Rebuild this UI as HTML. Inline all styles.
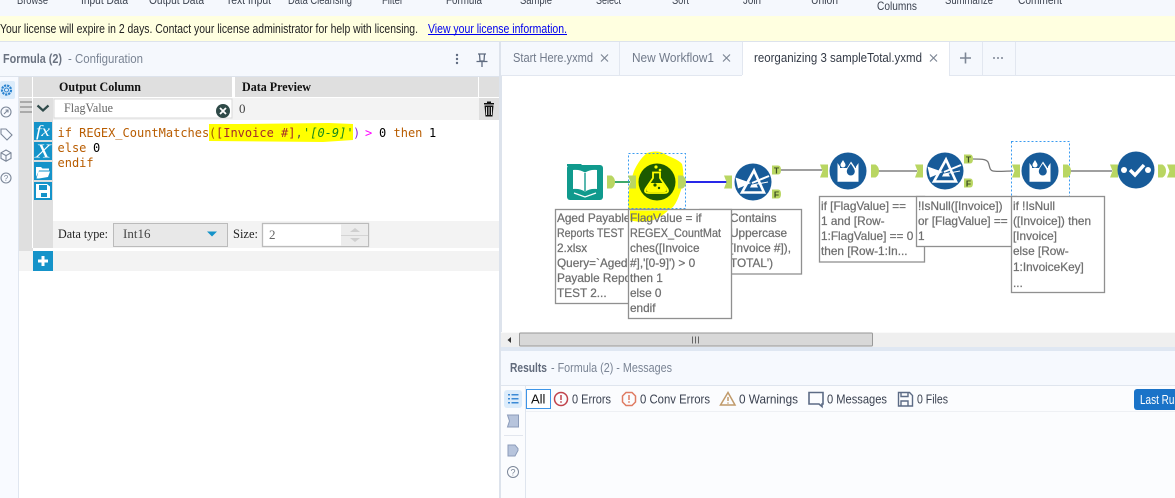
<!DOCTYPE html>
<html><head><meta charset="utf-8"><style>
html,body{margin:0;padding:0;background:#fff;width:1175px;height:498px;overflow:hidden}
svg{display:block}
text{font-family:"Liberation Sans",sans-serif;white-space:pre}
.tb{font-size:12px;fill:#3c4350}
.m{font-family:"DejaVu Sans Mono",monospace;font-size:12px}
.s{font-family:"Liberation Serif",serif}
.a{font-size:11.800px;fill:#6f6f6f;stroke:#6f6f6f;stroke-width:.25}
.r{font-size:13px;fill:#3a4150}
.box{fill:#fff;stroke:#909090;stroke-width:1.300}
</style></head><body>
<svg width="1175" height="498" viewBox="0 0 1175 498" xmlns="http://www.w3.org/2000/svg">
<defs>
<path id="in" d="M0-6.500h8v13H0l2.500-6.500z" fill="#b9d662"/>
<path id="out" d="M0-6.500h4.500q3.500 2 3.500 6.500t-3.500 6.500H0z" fill="#b9d662"/>
<g id="prism"><circle r="18.500" fill="#175b99"/>
<path d="M1-11.500 11 10.500H-11z" fill="none" stroke="#fff" stroke-width="2.600"/>
<path d="M-17.500-4.500-2 1-15 6.500z" fill="#fff"/><path d="M-1 1 16-6" stroke="#fff" stroke-width="2"/><path d="M-1 3 15 0" stroke="#fff" stroke-width="1"/>
<path d="M-3 5.500h8l-1.500-3h-5z" fill="#fff"/></g>
<g id="drop"><circle r="18.500" fill="#175b99"/>
<path d="M-10.500-8-8-4.500V-3H-1L3-9.500 7.500-3H8v-1.500L10.500-8V10.700H-10.500z" fill="#fff"/>
<path d="M2.800-7.500c2 3.500 4 5.500 4 8a4 4 0 0 1-8 0c0-2.500 2-4.500 4-8z" fill="#175b99"/>
<path d="M-5-11c1.100 2 2.500 3.500 2.500 5a2.500 2.500 0 0 1-5 0c0-1.500 1.400-3 2.500-5z" fill="#fff"/></g>
</defs>

<!-- top -->
<rect width="1175" height="16" fill="#f5f8fd"/>
<rect y="16" width="1175" height="25" fill="#ffffe0"/>
<rect y="41" width="1175" height="1" fill="#dde3ec"/>
<text x="17" y="4" class="tb" textLength="31" lengthAdjust="spacingAndGlyphs">Browse</text>
<text x="81" y="4" class="tb" textLength="47" lengthAdjust="spacingAndGlyphs">Input Data</text>
<text x="149" y="4" class="tb" textLength="55" lengthAdjust="spacingAndGlyphs">Output Data</text>
<text x="226" y="4" class="tb" textLength="45" lengthAdjust="spacingAndGlyphs">Text Input</text>
<text x="288" y="4" class="tb" textLength="64" lengthAdjust="spacingAndGlyphs">Data Cleansing</text>
<text x="382" y="4" class="tb" textLength="21" lengthAdjust="spacingAndGlyphs">Filter</text>
<text x="446" y="4" class="tb" textLength="36" lengthAdjust="spacingAndGlyphs">Formula</text>
<text x="520" y="4" class="tb" textLength="32" lengthAdjust="spacingAndGlyphs">Sample</text>
<text x="596" y="4" class="tb" textLength="25" lengthAdjust="spacingAndGlyphs">Select</text>
<text x="672" y="4" class="tb" textLength="17" lengthAdjust="spacingAndGlyphs">Sort</text>
<text x="743" y="4" class="tb" textLength="18" lengthAdjust="spacingAndGlyphs">Join</text>
<text x="811" y="4" class="tb" textLength="27" lengthAdjust="spacingAndGlyphs">Union</text>
<text x="877" y="10" class="tb" textLength="40" lengthAdjust="spacingAndGlyphs">Columns</text>
<text x="945" y="4" class="tb" textLength="48" lengthAdjust="spacingAndGlyphs">Summarize</text>
<text x="1018" y="4" class="tb" textLength="44" lengthAdjust="spacingAndGlyphs">Comment</text>
<text x="0" y="33" font-size="12.500" fill="#222" textLength="418" lengthAdjust="spacingAndGlyphs">Your license will expire in 2 days. Contact your license administrator for help with licensing.</text>
<text x="428" y="33" font-size="12.500" fill="#0000ee" textLength="139" lengthAdjust="spacingAndGlyphs">View your license information.</text>
<rect x="428" y="34" width="139" height="1" fill="#0000ee"/>

<!-- left panel -->
<rect y="42" width="499" height="34" fill="#f5f8fd"/>
<text x="3" y="63" font-size="12.500" font-weight="bold" fill="#6a7280" textLength="59" lengthAdjust="spacingAndGlyphs">Formula (2)</text>
<text x="68" y="63" font-size="12.500" fill="#7a8494" textLength="75" lengthAdjust="spacingAndGlyphs">- Configuration</text>
<g fill="#5f6b80"><circle cx="457" cy="55" r="1.200"/><circle cx="457" cy="59" r="1.200"/><circle cx="457" cy="63" r="1.200"/></g>
<path d="M478 54h8M479.500 54l.5 7h4l.5-7M476.500 61.500h11M482 61.500V67" fill="none" stroke="#5f6b80" stroke-width="1.300"/>
<rect y="76" width="19" height="422" fill="#f8faff"/>
<rect x="18" y="76" width="1" height="422" fill="#e0e6f0"/>
<rect y="76" width="499" height="1" fill="#dde3ec"/>
<rect x="0" y="81" width="15" height="18" rx="2" fill="#dcecfb"/>
<circle cx="6.500" cy="90" r="4.500" fill="none" stroke="#2a83d0" stroke-width="2.200" stroke-dasharray="2.200 .9"/><circle cx="6.500" cy="90" r="2" fill="none" stroke="#2a83d0" stroke-width="1"/>
<g fill="none" stroke="#7c8799" stroke-width="1.100">
<circle cx="6" cy="112" r="5"/><path d="M4 114l4-4M5.500 110H8v2.500"/>
<path d="M1 129h5l6 6-5 5-6-6z"/>
<path d="M6 150l5 2.800v5.600l-5 2.800-5-2.800v-5.600zM1 152.800l5 2.800 5-2.800M6 155.600v6"/>
<circle cx="6" cy="178" r="5"/></g>
<text x="6" y="181" font-size="8" fill="#7c8799" text-anchor="middle">?</text>

<rect x="19" y="77" width="14" height="194" fill="#dfdfdf"/>
<rect x="33" y="77" width="20" height="171" fill="#dfdfdf"/>
<rect x="53" y="77" width="179" height="20" fill="#dfdfdf"/>
<rect x="235" y="77" width="243" height="20" fill="#dfdfdf"/>
<rect x="479" y="77" width="20" height="20" fill="#dfdfdf"/>
<rect x="32" y="77" width="1" height="194" fill="#fff"/>
<rect x="19" y="97" width="480" height="1" fill="#fff"/>
<text x="59" y="91" class="s" font-size="13" font-weight="bold" fill="#111" textLength="82" lengthAdjust="spacingAndGlyphs">Output Column</text>
<text x="242" y="91" class="s" font-size="13" font-weight="bold" fill="#111" textLength="69" lengthAdjust="spacingAndGlyphs">Data Preview</text>
<rect x="53" y="98" width="446" height="22" fill="#f3f3f3"/>
<rect x="479" y="98" width="20" height="22" fill="#dfdfdf"/>
<rect x="20" y="101" width="12" height="2" fill="#aaa"/><rect x="20" y="106" width="12" height="2" fill="#aaa"/><rect x="20" y="111" width="12" height="2" fill="#aaa"/>
<path d="M37.500 105.500l5.500 5 5.500-5" fill="none" stroke="#2f4a4a" stroke-width="2.200"/>
<rect x="54" y="99" width="178" height="19" fill="#fff" stroke="#d8d8d8"/>
<text x="64" y="112" class="s" font-size="13" fill="#666" textLength="49" lengthAdjust="spacingAndGlyphs">FlagValue</text>
<circle cx="223" cy="111" r="7" fill="#2f4a48"/><path d="M220 108l6 6M226 108l-6 6" stroke="#fff" stroke-width="1.800"/>
<text x="239" y="113" class="s" font-size="13" fill="#444">0</text>
<g fill="#111"><rect x="484" y="103" width="10" height="1.500"/><rect x="487" y="101.500" width="4" height="1.500"/><path d="M484.500 105.500h9l-1 11h-7zM486 107v8h1v-8zM488.500 107v8h1v-8zM491 107v8h1v-8z" fill-rule="evenodd"/></g>

<rect x="53" y="120" width="446" height="101" fill="#fff"/>
<rect x="53" y="221" width="446" height="27" fill="#f3f3f3"/>
<rect x="19" y="248" width="480" height="3" fill="#fff"/>
<rect x="19" y="248" width="14" height="3" fill="#dfdfdf"/>
<rect x="19" y="251" width="480" height="20" fill="#f3f3f3"/>
<g fill="#1593c9">
<rect x="34" y="122" width="18" height="18"/><rect x="34" y="142" width="18" height="18"/><rect x="34" y="162" width="18" height="18"/><rect x="34" y="182" width="18" height="18"/><rect x="33" y="251" width="20" height="20"/></g>
<text x="36" y="136" class="s" font-size="16" font-style="italic" fill="#fff" textLength="14" lengthAdjust="spacingAndGlyphs">fx</text>
<text x="35" y="157.500" class="s" font-size="20" font-style="italic" fill="#fff" textLength="16" lengthAdjust="spacingAndGlyphs">X</text>
<path d="M36 167h5l1.500 1.500H49v2H39l-3 6.500zM38.500 171.500H50l-2 5.500-9 1.500H36.500z" fill="#fff"/>
<path d="M36 184h11l3 2.500V198H36zM39 185v5h8v-5zM41 193h6v4h-6z" fill="#fff" fill-rule="evenodd"/>
<path d="M43 256v10M38 261h10" stroke="#fff" stroke-width="3"/>

<path d="M209 124h30l90-1 24 1v16l-30 2-114-1z" fill="#ffff00"/>
<text x="57.500" y="137" class="m" fill="#b85c00">if REGEX_CountMatches</text>
<text x="209" y="137" class="m" fill="#a05a00">(</text>
<text x="216" y="137" class="m" fill="#a52a2a">[Invoice #]</text>
<text x="295.500" y="137" class="m" fill="#555">,</text>
<text x="303" y="137" class="m" font-style="italic" fill="#1a8a1a">'[0-9]'</text>
<text x="353" y="137" class="m" fill="#8a2be2">)</text>
<text x="365" y="137" class="m" fill="#ff00ff">&gt;</text>
<text x="379" y="137" class="m" fill="#000">0</text>
<text x="393.500" y="137" class="m" fill="#b85c00">then</text>
<text x="429" y="137" class="m" fill="#000">1</text>
<text x="57.500" y="152" class="m" fill="#b85c00">else</text>
<text x="93" y="152" class="m" fill="#000">0</text>
<text x="57.500" y="167" class="m" fill="#b85c00">endif</text>

<text x="58" y="238" class="s" font-size="12.500" fill="#222" textLength="50" lengthAdjust="spacingAndGlyphs">Data type:</text>
<rect x="113.500" y="223.500" width="114" height="23" fill="#e8e8e8" stroke="#bbb"/>
<text x="123" y="238" class="s" font-size="13" fill="#444">Int16</text>
<path d="M207 231.500h10l-5 5z" fill="#1593c9"/>
<text x="233" y="238" class="s" font-size="12.500" fill="#222">Size:</text>
<rect x="262.500" y="223.500" width="106" height="23" fill="#fff" stroke="#bbb" stroke-width="1.300"/>
<rect x="341" y="224" width="27" height="22" fill="#ececec"/>
<rect x="341" y="235" width="27" height="1" fill="#d4d4d4"/>
<path d="M350 232l5-4 5 4zM350 238l5 4 5-4z" fill="#cfcfcf"/>
<text x="269" y="239" class="s" font-size="13" fill="#666">2</text>

<rect x="499" y="42" width="2" height="456" fill="#dde3ec"/>

<!-- tabs -->
<rect x="501" y="42" width="674" height="33" fill="#f5f8fd"/>
<rect x="501" y="75" width="674" height="1" fill="#e2e7f0"/>
<rect x="742" y="42" width="207" height="34" fill="#fff"/>
<g fill="#e2e7f0"><rect x="619" y="42" width="1" height="33"/><rect x="742" y="42" width="1" height="33"/><rect x="949" y="42" width="1" height="33"/><rect x="982" y="42" width="1" height="33"/><rect x="1015" y="42" width="1" height="33"/></g>
<text x="513" y="62" font-size="13" fill="#717a8a" textLength="80" lengthAdjust="spacingAndGlyphs">Start Here.yxmd</text>
<text x="632" y="62" font-size="13" fill="#717a8a" textLength="82" lengthAdjust="spacingAndGlyphs">New Workflow1</text>
<text x="754" y="62" font-size="13" fill="#333a46" textLength="168" lengthAdjust="spacingAndGlyphs">reorganizing 3 sampleTotal.yxmd</text>
<path d="M601 54.500l7 7M608 54.500l-7 7M723 54.500l7 7M730 54.500l-7 7M930 54.500l7 7M937 54.500l-7 7" stroke="#7d8695" stroke-width="1.200"/>
<path d="M965.500 52.500v11M960 58h11" stroke="#7d8695" stroke-width="1.600"/>
<g fill="#7d8695"><circle cx="994" cy="58" r="1"/><circle cx="998" cy="58" r="1"/><circle cx="1002" cy="58" r="1"/></g>

<rect x="501" y="76" width="1" height="257" fill="#dde3ec"/>

<!-- workflow lines -->
<path d="M614 182H630" stroke="#3da86a" stroke-width="2"/>
<path d="M686 182H727" stroke="#2828e8" stroke-width="2"/>
<path d="M781 170H822M878 171H917M1070 171H1112" stroke="#a0a0a0" stroke-width="2"/>
<path d="M973 159c8 0 13 0 15 3 2 4 1 8 5 9 4 1 12 0 20 0" fill="none" stroke="#777" stroke-width="1.300"/>

<!-- yellow -->
<path d="M647 153c6-2 12-2 16 0 6 4 15 6 19 11 2 8 2 18-1 26-2 6-4 12-8 17l-8 6h-36c-1-8-1-14 0-22 1-8 3-14 5-20 3-7 8-14 13-18z" fill="#ffff00"/>
<rect x="628.500" y="153.500" width="57" height="55" fill="none" stroke="#3a9bf0" stroke-dasharray="2 2"/>
<rect x="1011.500" y="141.500" width="58" height="55" fill="none" stroke="#3a9bf0" stroke-dasharray="2 2"/>

<!-- tools -->
<rect x="567" y="165" width="36" height="35" rx="3" fill="#109a8d"/><path d="M567 166v-2h14l2 2z" fill="#109a8d"/>
<path d="M585 172.500c-4-2.500-8-3-12-2.500v19c4-.5 8 0 12 2.500 4-2.500 8-3 12-2.500v-19c-4-.5-8 0-12 2.500z" fill="#fff"/><path d="M585 173v18" stroke="#109a8d" stroke-width="1.400"/><path d="M574 193l11 4 11-4" fill="none" stroke="#fff" stroke-width="1.200"/>
<use href="#out" x="607" y="182"/><use href="#in" x="628" y="182"/>

<circle cx="657" cy="182" r="18.500" fill="#1d5a00"/>
<path d="M653 172.500h7v5.500l7.500 11c1.500 3-.5 4-3.500 4h-15c-3 0-5-1-3.500-4l7.500-11z" fill="none" stroke="#ffff00" stroke-width="1.800"/>
<path d="M650.500 183h12l4 6c1 2-.5 3-3 3h-14c-2.500 0-4-1-3-3z" fill="#ffff00"/>
<circle cx="655" cy="185" r="1.600" fill="#1d5a00"/><circle cx="659" cy="188" r="1.200" fill="#1d5a00"/>
<circle cx="656" cy="167" r="1.600" fill="#ffff00"/><circle cx="660" cy="170" r="1.300" fill="#ffff00"/>
<use href="#out" x="678" y="182"/>
<use href="#in" x="724" y="182"/>
<use href="#prism" x="753" y="182"/>
<path d="M772 165.500h6q3 0 3 4.500t-3 4.500h-6zM772 189.500h6q3 0 3 4.500t-3 4.500h-6z" fill="#b9d662"/>
<text x="776.500" y="173.500" font-size="8.500" font-weight="bold" fill="#3a4a20" text-anchor="middle">T</text>
<text x="776.500" y="197.500" font-size="8.500" font-weight="bold" fill="#3a4a20" text-anchor="middle">F</text>

<use href="#in" x="820" y="171"/><use href="#drop" x="848" y="171"/><use href="#out" x="871" y="171"/>
<use href="#in" x="915" y="171"/><use href="#prism" x="945" y="171"/>
<path d="M964 154.500h6q3 0 3 4.500t-3 4.500h-6zM964 178.500h6q3 0 3 4.500t-3 4.500h-6z" fill="#b9d662"/>
<text x="968.500" y="162.500" font-size="8.500" font-weight="bold" fill="#3a4a20" text-anchor="middle">T</text>
<text x="968.500" y="186.500" font-size="8.500" font-weight="bold" fill="#3a4a20" text-anchor="middle">F</text>
<use href="#in" x="1012" y="171"/><use href="#drop" x="1040" y="171"/><use href="#out" x="1063" y="171"/>
<use href="#in" x="1110" y="171"/>
<circle cx="1136" cy="170" r="18.500" fill="#175b99"/>
<circle cx="1124" cy="170" r="3" fill="#fff"/><circle cx="1148" cy="170" r="3" fill="#fff"/><path d="M1130 170l5 5 9-10" fill="none" stroke="#fff" stroke-width="3.400"/>
<use href="#out" x="1158" y="171"/><use href="#in" x="1167" y="171"/>

<!-- annotations -->
<rect x="555.500" y="209.500" width="100" height="94" class="box"/>
<text x="557" y="222" class="a">Aged Payable</text><text x="557" y="237" class="a" textLength="67" lengthAdjust="spacingAndGlyphs">Reports TEST</text><text x="557" y="252" class="a">2.xlsx</text><text x="557" y="267" class="a">Query=`Aged</text><text x="557" y="282" class="a">Payable Repo</text><text x="557" y="297" class="a">TEST 2...</text>
<rect x="700" y="209.500" width="101.500" height="64.500" class="box"/>
<text x="730" y="222" class="a">Contains</text><text x="730" y="237" class="a">Uppercase</text><text x="730" y="252" class="a">[Invoice #]),</text><text x="730" y="267" class="a">TOTAL')</text>
<rect x="628.500" y="209.500" width="103" height="109" class="box"/>
<path d="M630 210.500h38c-4 4-10 8-16 10-8 2-16 1-22 0z" fill="#ffff00"/>
<text x="630" y="222" class="a">FlagValue = if</text><text x="630" y="237" class="a" textLength="91" lengthAdjust="spacingAndGlyphs">REGEX_CountMat</text><text x="630" y="252" class="a">ches([Invoice</text><text x="630" y="267" class="a">#],'[0-9]') &gt; 0</text><text x="630" y="282" class="a">then 1</text><text x="630" y="297" class="a">else 0</text><text x="630" y="312" class="a">endif</text>

<rect x="819.500" y="196.500" width="105" height="65.500" class="box"/>
<text x="821" y="210" class="a">if [FlagValue] ==</text><text x="821" y="225" class="a">1 and [Row-</text><text x="821" y="240" class="a">1:FlagValue] == 0</text><text x="821" y="255" class="a">then [Row-1:In...</text>
<rect x="916.500" y="196.500" width="100" height="50" class="box"/>
<text x="918" y="210" class="a">!IsNull([Invoice])</text><text x="918" y="225" class="a">or [FlagValue] ==</text><text x="918" y="240" class="a">1</text>
<rect x="1011.500" y="196.500" width="93" height="96" class="box"/>
<text x="1013" y="210" class="a">if !IsNull</text><text x="1013" y="225" class="a">([Invoice]) then</text><text x="1013" y="240" class="a">[Invoice]</text><text x="1013" y="255" class="a">else [Row-</text><text x="1013" y="271" class="a">1:InvoiceKey]</text><text x="1013" y="287" class="a">...</text>

<!-- scrollbar -->
<rect x="501" y="332" width="674" height="15" fill="#efefef"/>
<rect x="501" y="332" width="674" height="1" fill="#fafafa"/>
<path d="M511 337v6l-3.500-3z" fill="#333"/>
<rect x="519.500" y="333" width="353" height="13" rx="1" fill="#d8d8d8" stroke="#999"/>
<path d="M692.500 336.500v7M695.500 336.500v7M698.500 336.500v7" stroke="#666"/>
<rect x="501" y="347" width="674" height="4" fill="#dfe7f2"/>

<!-- results -->
<rect x="501" y="351" width="674" height="147" fill="#fbfcfe"/>
<rect x="501" y="351" width="674" height="34" fill="#f6f9fe"/>
<rect x="501" y="385" width="674" height="1" fill="#dfe5ee"/>
<rect x="526" y="411" width="649" height="1" fill="#eef0f4"/>
<rect x="525" y="386" width="1" height="112" fill="#dfe5ee"/>
<text x="510" y="372" font-size="12.500" font-weight="bold" fill="#626b7c" textLength="37" lengthAdjust="spacingAndGlyphs">Results</text>
<text x="551" y="372" font-size="12.500" fill="#7a8494" textLength="121" lengthAdjust="spacingAndGlyphs">- Formula (2) - Messages</text>
<rect x="504" y="390" width="18" height="18" rx="3" fill="#dcecfb"/>
<g fill="#3b8ad6"><rect x="508" y="394" width="2" height="1.500"/><rect x="508" y="398" width="2" height="1.500"/><rect x="508" y="402" width="2" height="1.500"/><rect x="511.500" y="394" width="7" height="1.500"/><rect x="511.500" y="398" width="7" height="1.500"/><rect x="511.500" y="402" width="7" height="1.500"/></g>
<path d="M507.500 415h11v12h-11l2-6z" fill="#b7c4dc" stroke="#8c9cba"/>
<rect x="504" y="435" width="19" height="1" fill="#e2e6ee"/>
<path d="M508 445h7l3 3.500v2L515 456h-7z" fill="#b7c4dc" stroke="#8c9cba"/>
<circle cx="513" cy="472" r="5.500" fill="none" stroke="#7c8799"/><text x="513" y="475.500" font-size="9" fill="#7c8799" text-anchor="middle">?</text>

<rect x="526.500" y="389.500" width="24" height="19" fill="#fff" stroke="#3d95e8"/>
<text x="531" y="403.500" class="r" style="fill:#111">All</text>
<circle cx="561" cy="399" r="6.500" fill="none" stroke="#c0424b" stroke-width="1.500"/><path d="M561 395v5" stroke="#c0424b" stroke-width="1.500"/><circle cx="561" cy="402" r=".9" fill="#c0424b"/>
<text x="572" y="403.500" class="r" textLength="39" lengthAdjust="spacingAndGlyphs">0 Errors</text>
<path d="M626 392.500h6l3.500 3.500v6l-3.500 3.500h-6l-3.500-3.500v-6z" fill="none" stroke="#df7b62" stroke-width="1.500"/><path d="M629 395v5" stroke="#df7b62" stroke-width="1.500"/><circle cx="629" cy="402" r=".9" fill="#df7b62"/>
<text x="640" y="403.500" class="r" textLength="70" lengthAdjust="spacingAndGlyphs">0 Conv Errors</text>
<path d="M728 392.500l7 12.500h-14.500z" fill="none" stroke="#c09a6a" stroke-width="1.500"/><path d="M728 397v4" stroke="#c09a6a" stroke-width="1.500"/><circle cx="728" cy="403" r=".8" fill="#c09a6a"/>
<text x="739" y="403.500" class="r" textLength="59" lengthAdjust="spacingAndGlyphs">0 Warnings</text>
<path d="M809 392.500h14v11.500h-1v2.500l-3-2.500h-10z" fill="none" stroke="#5c6b85" stroke-width="1.600"/>
<text x="827" y="403.500" class="r" textLength="60" lengthAdjust="spacingAndGlyphs">0 Messages</text>
<path d="M898.500 392.500h11l3 3v10.500h-14zM901 392.500v4h7v-4M901 406v-5h7v5" fill="none" stroke="#5c6b85" stroke-width="1.400"/>
<text x="917" y="403.500" class="r" textLength="31" lengthAdjust="spacingAndGlyphs">0 Files</text>
<rect x="1134" y="389" width="50" height="21" rx="3" fill="#1a73c8"/>
<text x="1140" y="404" font-size="12.500" fill="#fff" textLength="40" lengthAdjust="spacingAndGlyphs">Last Run</text>
</svg>
</body></html>
